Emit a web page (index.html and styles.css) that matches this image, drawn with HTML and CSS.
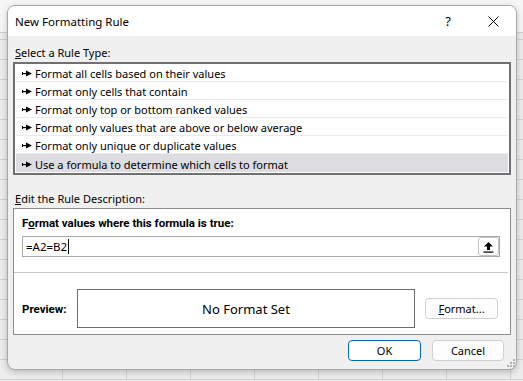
FILE: index.html
```html
<!DOCTYPE html>
<html>
<head>
<meta charset="utf-8">
<link rel="stylesheet" href="styles.css">
</head>
<body>
<div class="desk">
  <div class="dialog">
    <div class="titlebar">
      <span class="title">New Formatting Rule</span>
      <span class="cap help">?</span>
      <span class="cap close">
        <svg width="11" height="11" viewBox="0 0 11 11"><path d="M0.5 0.5 L10.5 10.5 M10.5 0.5 L0.5 10.5" stroke="#000" stroke-width="1" fill="none"/></svg>
      </span>
    </div>
    <div class="content">
      <div class="label"><u>S</u>elect a Rule Type:</div>
      <div class="list">
        <div class="row"><svg class="arr" width="10" height="7" viewBox="0 0 10 7"><rect x="0" y="2" width="1" height="3" fill="#000"/><rect x="0" y="3" width="5" height="1.2" fill="#000"/><path d="M4 0.5 L10 3.5 L4 6.5 Z" fill="#000"/></svg><span>Format all cells based on their values</span></div>
        <div class="row"><svg class="arr" width="10" height="7" viewBox="0 0 10 7"><rect x="0" y="2" width="1" height="3" fill="#000"/><rect x="0" y="3" width="5" height="1.2" fill="#000"/><path d="M4 0.5 L10 3.5 L4 6.5 Z" fill="#000"/></svg><span>Format only cells that contain</span></div>
        <div class="row"><svg class="arr" width="10" height="7" viewBox="0 0 10 7"><rect x="0" y="2" width="1" height="3" fill="#000"/><rect x="0" y="3" width="5" height="1.2" fill="#000"/><path d="M4 0.5 L10 3.5 L4 6.5 Z" fill="#000"/></svg><span>Format only top or bottom ranked values</span></div>
        <div class="row"><svg class="arr" width="10" height="7" viewBox="0 0 10 7"><rect x="0" y="2" width="1" height="3" fill="#000"/><rect x="0" y="3" width="5" height="1.2" fill="#000"/><path d="M4 0.5 L10 3.5 L4 6.5 Z" fill="#000"/></svg><span>Format only values that are above or below average</span></div>
        <div class="row"><svg class="arr" width="10" height="7" viewBox="0 0 10 7"><rect x="0" y="2" width="1" height="3" fill="#000"/><rect x="0" y="3" width="5" height="1.2" fill="#000"/><path d="M4 0.5 L10 3.5 L4 6.5 Z" fill="#000"/></svg><span>Format only unique or duplicate values</span></div>
        <div class="row selected"><svg class="arr" width="10" height="7" viewBox="0 0 10 7"><rect x="0" y="2" width="1" height="3" fill="#000"/><rect x="0" y="3" width="5" height="1.2" fill="#000"/><path d="M4 0.5 L10 3.5 L4 6.5 Z" fill="#000"/></svg><span>Use a formula to determine which cells to format</span></div>
      </div>
      <div class="label label2"><u>E</u>dit the Rule Description:</div>
      <div class="panel">
        <div class="bold">F<u>o</u>rmat values where this formula is true:</div>
        <div class="input">
          <span class="formula">=A2=B2</span><span class="caret"></span>
          <span class="collapse">
            <svg width="11" height="12" viewBox="0 0 11 12"><path d="M5.5 1 L10 5.5 L7 5.5 L7 9 L4 9 L4 5.5 L1 5.5 Z" fill="#000"/><rect x="0.5" y="10.5" width="10" height="1.2" fill="#000"/></svg>
          </span>
        </div>
        <div class="sep"></div>
        <div class="preview-row">
          <div class="bold plabel">Preview:</div>
          <div class="preview">No Format Set</div>
          <div class="btn fmt"><u>F</u>ormat...</div>
        </div>
      </div>
      <div class="footer">
        <div class="btn ok">OK</div>
        <div class="btn cancel">Cancel</div>
      </div>
    </div>
    <svg class="grip" width="8" height="8" viewBox="0 0 8 8">
      <rect x="6" y="0" width="2" height="2" fill="#b4b4b4"/>
      <rect x="3" y="3" width="2" height="2" fill="#b4b4b4"/>
      <rect x="6" y="3" width="2" height="2" fill="#b4b4b4"/>
      <rect x="0" y="6" width="2" height="2" fill="#b4b4b4"/>
      <rect x="3" y="6" width="2" height="2" fill="#b4b4b4"/>
      <rect x="6" y="6" width="2" height="2" fill="#b4b4b4"/>
    </svg>
  </div>
</div>
</body>
</html>
```
FILE: styles.css
```css
html, body {
  margin: 0;
  padding: 0;
}
body {
  width: 523px;
  height: 381px;
  overflow: hidden;
  font-family: "Segoe UI", "Noto Sans", sans-serif;
  font-size: 11px;
  color: #000;
  background-color: #ececec;
  background-image:
    linear-gradient(to bottom, #f6f6f6 0, #f6f6f6 32px, #cfcfcf 32px, #cfcfcf 33px, transparent 33px),
    linear-gradient(to right, transparent 62px, #d2d2d2 62px, #d2d2d2 63px, transparent 63px),
    linear-gradient(to bottom, transparent 19px, #d2d2d2 19px, #d2d2d2 20px, transparent 20px);
  background-size: 100% 100%, 64px 100%, 100% 20px;
  background-repeat: no-repeat, repeat, repeat;
}
.desk {
  padding: 5px 6px 0 7px;
}
.dialog {
  position: relative;
  width: 510px;
  height: 365px;
  box-sizing: border-box;
  border: 1px solid #a8a8a8;
  border-radius: 8px;
  background: #f0f0f0;
  box-shadow: 0 2px 6px rgba(0,0,0,0.22);
  overflow: hidden;
  display: flex;
  flex-direction: column;
}
.titlebar {
  height: 30px;
  flex: none;
  background: #fff;
  display: flex;
  align-items: center;
  padding-left: 7px;
}
.title {
  flex: 1;
  font-size: 11.5px;
  line-height: 16px;
  padding-top: 1px;
}
.cap {
  width: 46px;
  height: 30px;
  display: flex;
  align-items: center;
  justify-content: center;
}
.help {
  font-size: 13px;
  padding-left: 2px;
  box-sizing: border-box;
}
.content {
  flex: 1;
  padding: 8px 5px 0;
  display: flex;
  flex-direction: column;
}
.label {
  line-height: 16px;
  height: 16px;
  margin-bottom: 2px;
  padding-left: 2px;
  padding-top: 1px;
  box-sizing: border-box;
}
.label2 {
  margin-top: 15px;
}
.list {
  border: 2px solid #707070;
  background: #fff;
  padding: 0 1px 1px;
}
.row {
  height: 18px;
  box-sizing: border-box;
  border-bottom: 1px solid #ebebeb;
  display: flex;
  align-items: center;
  padding-left: 6px;
  padding-top: 2px;
  white-space: nowrap;
}
.row .arr {
  margin-right: 3px;
  flex: none;
}
.row.selected {
  background: #dcdce1;
  border-bottom: none;
}
.panel {
  border: 1px solid #8c8c8c;
  background: #fff;
  padding: 6px 0 6px 8px;
}
.bold {
  font-family: "Roboto", "Noto Sans", sans-serif;
  font-size: 11.5px;
  font-weight: 700;
  line-height: 16px;
  height: 16px;
}
.input {
  margin-top: 5px;
  margin-right: 10px;
  height: 21px;
  box-sizing: border-box;
  border: 1px solid #a8a8a8;
  display: flex;
  align-items: center;
  padding-left: 3px;
}
.formula {
  font-size: 11.5px;
}
.caret {
  width: 1px;
  height: 15px;
  background: #000;
  margin-left: 1px;
}
.collapse {
  margin-left: auto;
  width: 21px;
  height: 19px;
  box-sizing: border-box;
  border: 1px solid #c2c2c2;
  border-radius: 3px;
  background: #fff;
  display: flex;
  align-items: center;
  justify-content: center;
}
.sep {
  height: 1px;
  background: #c8c8c8;
  margin: 15px 2px 0 -8px;
}
.preview-row {
  margin-top: 16px;
  display: flex;
  align-items: center;
}
.plabel {
  width: 55px;
  flex: none;
}
.preview {
  width: 338px;
  height: 39px;
  box-sizing: border-box;
  border: 1px solid #6e6e6e;
  display: flex;
  align-items: center;
  justify-content: center;
  font-size: 13px;
}
.btn {
  height: 21px;
  box-sizing: border-box;
  border: 1px solid #d0d0d0;
  border-radius: 4px;
  background: #fdfdfd;
  display: flex;
  align-items: center;
  justify-content: center;
}
.fmt {
  width: 73px;
  margin-left: 10px;
}
.footer {
  padding-top: 5px;
  padding-right: 7px;
  display: flex;
  justify-content: flex-end;
  gap: 11px;
}
.ok {
  width: 73px;
  border-color: #0067c0;
  background: #fff;
}
.cancel {
  width: 72px;
}
.grip {
  position: absolute;
  right: 1px;
  bottom: 2px;
}
```
